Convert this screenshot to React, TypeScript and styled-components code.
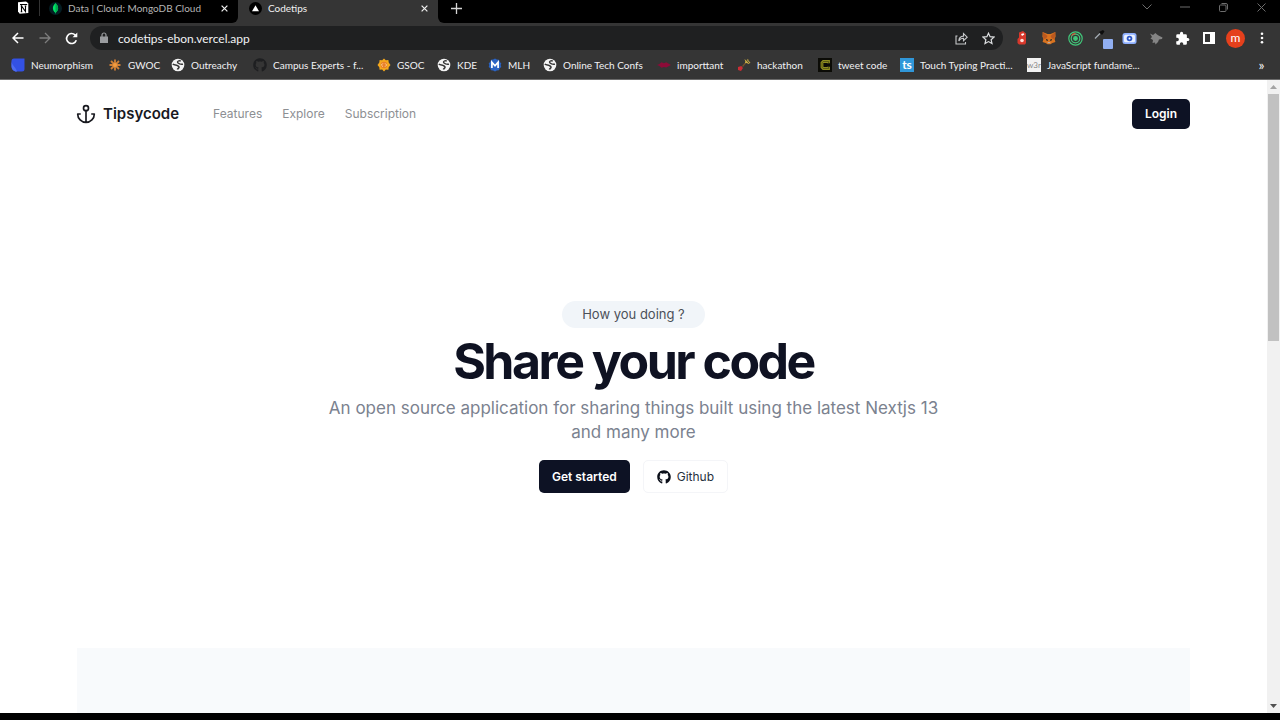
import React from "react";
import styled, { createGlobalStyle } from "styled-components";
import { FaGithub } from "react-icons/fa";

const chromeFont = `Lato, "Open Sans", sans-serif`;
const pageFont = `Inter, "Liberation Sans", sans-serif`;

const GlobalStyle = createGlobalStyle`
  *, *::before, *::after { box-sizing: border-box; }
  body { margin: 0; background: #000; }
  button, input { font: inherit; color: inherit; border: 0; background: none; padding: 0; margin: 0; }
  button { cursor: pointer; }
  a { color: inherit; text-decoration: none; }
  h1, p { margin: 0; }
  svg { display: block; flex: none; }
`;

const Window = styled.div`
  display: flex;
  flex-direction: column;
  height: 100vh;
  padding-bottom: 7px;
  overflow: hidden;
  background: #000;
`;

const Chrome = styled.header`
  flex: none;
  font-family: ${chromeFont};
  font-size: 10px;
  color: #f1f2f4;
  background: #353535;
`;

const TabStrip = styled.div`
  display: flex;
  height: 23px;
  background: #353535;
`;

const StripEnd = styled.div<{ $side: "left" | "right" }>`
  display: flex;
  flex: ${(p) => (p.$side === "right" ? "1" : "none")};
  background: #000;
  border-radius: ${(p) => (p.$side === "left" ? "0 0 6px 0" : "0 0 0 6px")};
`;

const PinnedTab = styled.button`
  display: flex;
  width: 40px;
  height: 16px;
  padding: 1px 0 0 17px;
  border-right: 1px solid #333;
`;

const Tab = styled.div<{ $active?: boolean }>`
  display: flex;
  align-items: center;
  gap: 6px;
  width: ${(p) => (p.$active ? 200 : 198)}px;
  height: 16px;
  padding-left: ${(p) => (p.$active ? 11 : 9)}px;
  padding-right: 10px;
  color: ${(p) => (p.$active ? "#f1f1f1" : "#b4b4b4")};
`;

const TabTitle = styled.button`
  flex: 1;
  text-align: left;
  line-height: 16px;
  white-space: nowrap;
`;

const IconButton = styled.button<{ $width?: number }>`
  display: flex;
  flex: none;
  align-items: center;
  justify-content: center;
  width: ${(p) => p.$width ?? 27}px;
  height: 22px;
`;

const NewTab = styled(IconButton)`
  height: 16px;
  margin-left: 5px;
`;

const WindowControls = styled.div`
  display: flex;
  margin-left: auto;
  height: 14px;
  color: #6d6d6d;
`;

const WindowButton = styled(IconButton)`
  width: 38px;
  height: 14px;
`;

const Toolbar = styled.div`
  display: flex;
  align-items: center;
  height: 30px;
  padding: 0 5px 0 4px;
`;

const Omnibox = styled.label`
  display: flex;
  flex: 1;
  align-items: center;
  height: 24px;
  margin: 0 6px 0 5px;
  padding: 0 1px 0 9px;
  border-radius: 12px;
  background: #1f2021;
`;

const Address = styled.input`
  flex: 1;
  min-width: 0;
  margin-left: 9px;
  font-size: 12px;
  outline: none;
`;

const Avatar = styled.span`
  display: grid;
  place-items: center;
  width: 19px;
  height: 19px;
  border-radius: 50%;
  background: #e5401c;
  color: #fff;
  font-size: 12px;
  line-height: 18px;
`;

const Bookmarks = styled.nav`
  display: flex;
  align-items: center;
  height: 26px;
  padding: 0 5px 3px 11px;
`;

const Bookmark = styled.a<{ $width: number }>`
  display: flex;
  align-items: center;
  gap: 6px;
  width: ${(p) => p.$width}px;
  line-height: 16px;
  white-space: nowrap;
`;

const Overflow = styled.button`
  margin-left: auto;
  width: 27px;
  font-size: 14px;
  line-height: 16px;
`;

const Viewport = styled.div`
  display: flex;
  flex: 1;
  min-height: 0;
  border-top: 1px solid #6b6b6b;
  background: #fff;
`;

const Page = styled.div`
  flex: 1;
  min-width: 0;
  overflow: hidden;
  padding: 0 77px;
  font-family: ${pageFont};
  color: #0f172a;
`;

const SiteHeader = styled.header`
  display: flex;
  align-items: center;
  height: 67px;
`;

const Brand = styled.a`
  display: flex;
  align-items: center;
  gap: 7px;
  font-size: 15px;
  font-weight: 600;
  color: #18191f;

  svg { margin-left: -1px; }
`;

const SiteNav = styled.nav`
  display: flex;
  flex: 1;
  gap: 20px;
  margin-left: 34px;
  font-size: 12px;
  color: #8d8f93;
`;

const Button = styled.button<{ $outline?: boolean; $small?: boolean }>`
  display: flex;
  align-items: center;
  gap: 6px;
  height: ${(p) => (p.$small ? 30 : 33)}px;
  padding: 0 13px;
  border-radius: 5px;
  border: ${(p) => (p.$outline ? "1px solid #f4f5f8" : "0")};
  background: ${(p) => (p.$outline ? "#fff" : "#0d1224")};
  color: ${(p) => (p.$outline ? "#27303d" : "#fff")};
  font-size: 12px;
  font-weight: ${(p) => (p.$outline ? 400 : 600)};
`;

const Hero = styled.section`
  display: flex;
  flex-direction: column;
  align-items: center;
  padding: 154px 0 155px;
  text-align: center;
`;

const Pill = styled.a`
  padding: 0 20px;
  border-radius: 14px;
  background: #f1f5f9;
  color: #4b5058;
  font-size: 13px;
  line-height: 27px;
`;

const Title = styled.h1`
  margin: 8px 0 10px;
  font-size: 50px;
  line-height: 50px;
  font-weight: 700;
  letter-spacing: -0.05em;
  color: #0f1222;
`;

const Lead = styled.p`
  max-width: 620px;
  font-size: 17px;
  line-height: 24px;
  color: #7b828f;
`;

const Actions = styled.div`
  display: flex;
  gap: 13px;
  margin-top: 16px;
`;

const FeaturePanel = styled.section`
  height: 400px;
  background: #f8fafc;
`;

const Scrollbar = styled.div`
  display: flex;
  flex-direction: column;
  align-items: center;
  width: 13px;
  background: #f1f1f1;
`;

const ScrollArrow = styled.div<{ $down?: boolean }>`
  display: grid;
  place-items: center;
  width: 13px;
  height: 14px;
  margin-top: ${(p) => (p.$down ? "auto" : "0")};
  color: ${(p) => (p.$down ? "#505050" : "#a3a3a3")};
`;

const ScrollThumb = styled.div`
  width: 11px;
  height: 39%;
  background: #c1c1c1;
`;

const AnchorIcon = () => (
  <svg width="20" height="20" viewBox="0 0 24 24" fill="none" stroke="currentColor" strokeWidth="2" strokeLinecap="round" strokeLinejoin="round">
    <circle cx="12" cy="5" r="3" />
    <path d="M12 22V8M5 12H2a10 10 0 0 0 20 0h-3" />
  </svg>
);

const NotionIcon = () => (
  <svg width="12" height="13" viewBox="0 0 12 13">
    <path d="M1 1.2 9 .5l2.3 1.8V12l-8.6.7L1 10.5Z" fill="#fff" />
    <path d="M3 3.5h7.2M4.500 10.500V5l4 5.500V5M3.700 5h1.600M7.700 5h1.600M3.700 10.700h1.600" fill="none" stroke="#000" strokeWidth="1.100" />
  </svg>
);

const MongoIcon = () => (
  <svg width="13" height="13" viewBox="0 0 13 13">
    <circle cx="6.5" cy="6.5" r="6.5" fill="#041d23" />
    <path d="M6.5 1C8.6 3 9.1 4.7 9.1 6.3c0 2-1 3.2-2.2 4.2L6.5 12l-.4-1.500C4.900 9.500 3.900 8.300 3.900 6.300 3.900 4.700 4.500 3 6.500 1Z" fill="#00e266" />
    <path d="M6.500 1c2.100 2 2.600 3.700 2.600 5.300 0 2-1 3.200-2.600 4.500Z" fill="#00a84d" />
  </svg>
);

const VercelIcon = () => (
  <svg width="13" height="13" viewBox="0 0 13 13">
    <circle cx="6.500" cy="6.500" r="6.500" fill="#000" />
    <path d="m6.500 3.200 3.500 6H3Z" fill="#fff" />
  </svg>
);

const CloseIcon = () => (
  <svg width="7" height="7" viewBox="0 0 8 8" fill="none" stroke="#f1f1f1" strokeWidth="1.400">
    <path d="m.7.7 6.600 6.600M7.300.7.7 7.300" />
  </svg>
);

const GlobeIcon = () => (
  <svg width="14" height="14" viewBox="0 0 14 14">
    <circle cx="7" cy="7" r="6.300" fill="#f4f4f4" />
    <path d="M9.800 3.200C8.500 2.300 6.600 2.800 6.500 4c-.1 1.300 1.200 1.400 2.300 1.900 1.200.5 2.300.4 3.200.2" fill="none" stroke="#353535" strokeWidth="1.400" />
    <path d="M1.800 6c1.500 1.500 3 .7 4.200 1.400 1 .6 2.300.8 2 2-.2.900-1.200 1-1.600 2.100" fill="none" stroke="#353535" strokeWidth="1.600" />
  </svg>
);

const GwocIcon = () => (
  <svg width="14" height="14" viewBox="0 0 14 14" stroke="#d07f35" strokeWidth="1.800">
    <path d="M7 1.500v11M1.500 7h11M3 3l8 8M11 3l-8 8" />
    <circle cx="7" cy="7" r="2" fill="#f29b3f" stroke="none" />
  </svg>
);

const GsocIcon = () => (
  <svg width="14" height="14" viewBox="0 0 14 14">
    <path d="m7 .5 1.800 1.700 2.600-.3.300 2.600L13.500 7l-1.800 2.200-.3 2.500-2.600-.2L7 13.500l-1.800-2-2.600.2-.3-2.500L.5 7l1.800-2.500.3-2.600 2.600.3Z" fill="#f5a81c" />
    <circle cx="7" cy="7" r="3.300" fill="#e87f2a" />
    <path d="M6 5.300 4.300 7 6 8.700M8 5.300 9.700 7 8 8.700" fill="none" stroke="#ffd08a" strokeWidth="1" />
  </svg>
);

const MlhIcon = () => (
  <svg width="14" height="14" viewBox="0 0 14 14">
    <path d="m7 .5 1.800 1 2.200.2.700 2L13.300 5.500 12.700 7l.6 2-1.600 1.300-.7 2-2.200.1L7 13.500l-1.800-1.100-2.200-.1-.7-2L.7 9l.6-2-.6-1.500 1.600-1.800.7-2 2.200-.2Z" fill="#2a63c4" />
    <path d="M3.900 10V4.200L7 7.700l3.100-3.500V10" fill="none" stroke="#fff" strokeWidth="1.700" />
  </svg>
);

const NeumorphismIcon = () => (
  <svg width="14" height="14" viewBox="0 0 14 14">
    <path d="M3 .5h10.500V11a2.500 2.500 0 0 1-2.500 2.500H5.500C2.500 13.500.5 11 .5 8V3A2.500 2.500 0 0 1 3 .5Z" fill="#3351e4" />
    <path d="M.5 3C1 8 5 9 6 13.500h-.5C2.500 13.500.5 11 .5 8Z" fill="#4d6bf0" />
  </svg>
);

const ImportantIcon = () => (
  <svg width="14" height="14" viewBox="0 0 14 14">
    <path d="M0 7c2-.3 3-1.500 4.300-2.700L7 5.200l2.200-.9L14 7l-4.800 2.600L7 9 4.300 9.700C3 8.500 2 7.500 0 7Z" fill="#8c0b38" />
  </svg>
);

const HackathonIcon = () => (
  <svg width="14" height="14" viewBox="0 0 14 14">
    <path d="m1 9 3.300-1 1.700 2-2 3-3-1Z" fill="#c92d35" />
    <path d="m5.500 8.500 2.500-3" stroke="#75502e" strokeWidth="1.200" />
    <path d="m7.500 1 2 1.800L11 .7l.7 2.300 1.800 1.500-2 1.500-1.700-1-2 .5.500-2Z" fill="#c8aa45" />
    <path d="m9 1.500 3 3.500" stroke="#4c4932" />
  </svg>
);

const TweetIcon = () => (
  <svg width="14" height="14" viewBox="0 0 14 14">
    <path d="M0 0h14v14H0Z" fill="#0b0b06" />
    <path d="M10.500 5.200V3.500H5.300L4 4.800v4.400l1.300 1.300h5.200V8.800" fill="none" stroke="#8d8c20" strokeWidth="2.800" />
    <path d="M10.500 5.200V3.500H5.300L4 4.800v4.400l1.300 1.300h5.200V8.800" fill="none" stroke="#3a3b0c" strokeWidth=".6" />
  </svg>
);

const LetterIcon = styled.span<{ $bg: string; $color: string; $size: number }>`
  display: grid;
  place-items: center;
  flex: none;
  width: 14px;
  height: 14px;
  overflow: hidden;
  background: ${(p) => p.$bg};
  color: ${(p) => p.$color};
  font-size: ${(p) => p.$size}px;
  line-height: 12px;
  font-weight: ${(p) => (p.$size > 8 ? 700 : 400)};
`;

const bookmarks: { label: string; width: number; icon: React.ReactNode }[] = [
  { label: "Neumorphism", width: 97, icon: <NeumorphismIcon /> },
  { label: "GWOC", width: 63, icon: <GwocIcon /> },
  { label: "Outreachy", width: 82, icon: <GlobeIcon /> },
  { label: "Campus Experts - f...", width: 124, icon: <FaGithub size={14} color="#1e1f21" /> },
  { label: "GSOC", width: 60, icon: <GsocIcon /> },
  { label: "KDE", width: 51, icon: <GlobeIcon /> },
  { label: "MLH", width: 55, icon: <MlhIcon /> },
  { label: "Online Tech Confs", width: 114, icon: <GlobeIcon /> },
  { label: "importtant", width: 80, icon: <ImportantIcon /> },
  { label: "hackathon", width: 81, icon: <HackathonIcon /> },
  { label: "tweet code", width: 82, icon: <TweetIcon /> },
  { label: "Touch Typing Practi...", width: 127, icon: <LetterIcon $bg="#3097d9" $color="#fff" $size={12}>ts</LetterIcon> },
  { label: "JavaScript fundame...", width: 120, icon: <LetterIcon $bg="#f2f2f2" $color="#888" $size={8}>w3r</LetterIcon> },
];

const extensions: { name: string; width: number; icon: React.ReactNode }[] = [
  {
    name: "Red extension",
    width: 26,
    icon: (
      <svg width="14" height="16" viewBox="0 0 14 16">
        <path d="M4 2.500 8 1l3 2.500V13l-1 1.500H4L2.500 13V9L4 7.500Z" fill="#d8382c" />
        <path d="m6 4 2.500-.8.800 1.300L7 6Z" fill="#fff" />
        <circle cx="7" cy="10.500" r="1.800" fill="#ffe1db" />
      </svg>
    ),
  },
  {
    name: "Fox wallet",
    width: 27,
    icon: (
      <svg width="14" height="14" viewBox="0 0 14 14">
        <path d="m.7 1 4.800 2h3l4.800-2 .3 4.500-1 2.500.8 3-3 1-2 1.300H5.600L3.600 12l-3-1 .8-3-1-2.500Z" fill="#d9731f" />
        <path d="m.7 1 4.800 4-1.400 2.500-2.700.5ZM13.300 1 8.500 5l1.400 2.500 2.700.5Z" fill="#b95820" />
        <path d="m4 8 2 .8-.2 1.200L4 9.200ZM10 8l-2 .8.200 1.200L10 9.200Z" fill="#2c2a2a" />
        <path d="M5.800 11h2.400l.4 1.300H5.400Z" fill="#bda999" />
      </svg>
    ),
  },
  {
    name: "Target",
    width: 27,
    icon: (
      <svg width="15" height="15" viewBox="0 0 15 15" fill="none" stroke="#41c77a" strokeWidth="1.200">
        <circle cx="7.500" cy="7.500" r="6.700" />
        <circle cx="7.500" cy="7.500" r="4.300" />
        <circle cx="7.500" cy="7.500" r="1.800" fill="#41c77a" />
        <path d="M3.500 4.500a5 5 0 0 1 4-1.900" stroke="#d9573a" />
      </svg>
    ),
  },
  {
    name: "Colour picker",
    width: 27,
    icon: (
      <svg width="22" height="22" viewBox="0 0 22 22">
        <path d="m3 11.500 5-5" stroke="#a5adb5" strokeWidth="1.300" />
        <path d="m7 5 3 3 2.500-3.500L11 3Z" fill="#0d0d0d" />
        <rect x="11" y="12" width="10" height="10" rx="1" fill="#91aff1" />
      </svg>
    ),
  },
  {
    name: "Screenshot",
    width: 27,
    icon: (
      <svg width="15" height="13" viewBox="0 0 15 13">
        <rect x=".5" y="1" width="14" height="11" rx="2.500" fill="#8fb0ff" />
        <rect x="2" y="2.700" width="11" height="7.600" rx="1.500" fill="#e9f0ff" />
        <circle cx="7.500" cy="6.500" r="2.800" fill="#2c56c8" />
        <circle cx="7.500" cy="6.500" r="1" fill="#fff" />
      </svg>
    ),
  },
  {
    name: "Grey extension",
    width: 26,
    icon: (
      <svg width="14" height="14" viewBox="0 0 14 14">
        <path d="M1 2.500 4 4l2.500-2L8 3.500l1.500 1L13.500 6.500 13 8l-3 .5L9 11l-2.500 2.500-.5-2-2.500.5L4 9 1.500 7.500 3 6Z" fill="#858585" />
      </svg>
    ),
  },
  {
    name: "Extensions",
    width: 26,
    icon: (
      <svg width="15" height="15" viewBox="0 0 24 24" fill="#fff">
        <path d="M20.500 11H19V7a2 2 0 0 0-2-2h-4V3.500a2.500 2.500 0 0 0-5 0V5H4a2 2 0 0 0-2 2v3.800h1.500a2.700 2.700 0 0 1 0 5.400H2V20a2 2 0 0 0 2 2h3.800v-1.500a2.700 2.700 0 0 1 5.400 0V22H17a2 2 0 0 0 2-2v-4h1.500a2.500 2.500 0 0 0 0-5Z" />
      </svg>
    ),
  },
  {
    name: "Side panel",
    width: 27,
    icon: (
      <svg width="12" height="12" viewBox="0 0 12 12">
        <path d="M0 0h12v12H0ZM2 2v8h5V2Z" fill="#fff" fillRule="evenodd" />
      </svg>
    ),
  },
];

export default function App() {
  return (
    <Window>
      <GlobalStyle />
      <Chrome>
        <TabStrip>
          <StripEnd $side="left">
            <PinnedTab aria-label="Notion"><NotionIcon /></PinnedTab>
            <Tab>
              <MongoIcon />
              <TabTitle>Data | Cloud: MongoDB Cloud</TabTitle>
              <button aria-label="Close tab"><CloseIcon /></button>
            </Tab>
          </StripEnd>
          <Tab $active>
            <VercelIcon />
            <TabTitle>Codetips</TabTitle>
            <button aria-label="Close tab"><CloseIcon /></button>
          </Tab>
          <StripEnd $side="right">
            <NewTab aria-label="New tab">
              <svg width="11" height="11" viewBox="0 0 11 11" stroke="#d5d5d5" strokeWidth="1.300"><path d="M5.500 0v11M0 5.500h11" /></svg>
            </NewTab>
            <WindowControls>
              <WindowButton aria-label="Search tabs">
                <svg width="10" height="6" viewBox="0 0 10 6" fill="none" stroke="currentColor"><path d="m.5.5 4.500 4.500L9.500.5" /></svg>
              </WindowButton>
              <WindowButton aria-label="Minimize">
                <svg width="10" height="2" viewBox="0 0 10 2" stroke="currentColor"><path d="M0 1h10" /></svg>
              </WindowButton>
              <WindowButton aria-label="Restore">
                <svg width="9" height="9" viewBox="0 0 9 9" fill="none" stroke="currentColor"><rect x=".5" y="2" width="6.500" height="6.500" rx="1" /><path d="M2.500.5H7A1.500 1.500 0 0 1 8.500 2v4.500" /></svg>
              </WindowButton>
              <WindowButton aria-label="Close">
                <svg width="9" height="9" viewBox="0 0 9 9" stroke="currentColor"><path d="m.5.500 8 8M8.500.500l-8 8" /></svg>
              </WindowButton>
            </WindowControls>
          </StripEnd>
        </TabStrip>

        <Toolbar>
          <IconButton aria-label="Back">
            <svg width="12" height="12" viewBox="0 0 12 12" fill="none" stroke="#fff" strokeWidth="1.500"><path d="M11.500 6H1M6 1 1 6l5 5" /></svg>
          </IconButton>
          <IconButton aria-label="Forward">
            <svg width="12" height="12" viewBox="0 0 12 12" fill="none" stroke="#7d7d7d" strokeWidth="1.300"><path d="M.5 6H11M6 1l5 5-5 5" /></svg>
          </IconButton>
          <IconButton aria-label="Reload">
            <svg width="13" height="13" viewBox="0 0 13 13" fill="none" stroke="#fff" strokeWidth="1.600"><path d="M11.300 8.200A5 5 0 1 1 10 2.900L11.500 4.300" /><path d="M12.300.5v4.700H7.600Z" fill="#fff" stroke="none" /></svg>
          </IconButton>
          <Omnibox>
            <svg width="10" height="12" viewBox="0 0 10 12"><path d="M1 4.500h8V11H1Z" fill="#9a9c9f" /><path d="M3 5V3a2 2 0 0 1 4 0v2" fill="none" stroke="#9a9c9f" strokeWidth="1.200" /></svg>
            <Address aria-label="Address" defaultValue="codetips-ebon.vercel.app" />
            <IconButton aria-label="Share this page">
              <svg width="13" height="13" viewBox="0 0 13 13" fill="none" stroke="#c6c8ca" strokeWidth="1.100"><path d="M2.500 4H1v8h9.500v-2M3.800 9c.2-3.200 2-4.800 4.700-4.900V1.500L12.200 5.200 8.500 8.700V6.300C6.300 6.300 5 7 3.800 9Z" /></svg>
            </IconButton>
            <IconButton aria-label="Bookmark this tab">
              <svg width="13" height="13" viewBox="0 0 13 13" fill="none" stroke="#dcdee0" strokeWidth="1.200"><path d="m6.500 1.200 1.600 3.500 3.900.4-2.900 2.600.9 3.900-3.500-2-3.500 2 .9-3.900L1 5.100l3.900-.4Z" /></svg>
            </IconButton>
          </Omnibox>
          {extensions.map((e) => (
            <IconButton key={e.name} aria-label={e.name} $width={e.width}>{e.icon}</IconButton>
          ))}
          <IconButton aria-label="Profile"><Avatar>m</Avatar></IconButton>
          <IconButton aria-label="Menu" $width={26}>
            <svg width="4" height="12" viewBox="0 0 4 12" fill="#fff"><circle cx="2" cy="1.700" r="1.300" /><circle cx="2" cy="6" r="1.300" /><circle cx="2" cy="10.300" r="1.300" /></svg>
          </IconButton>
        </Toolbar>

        <Bookmarks aria-label="Bookmarks">
          {bookmarks.map((b) => (
            <Bookmark key={b.label} href="#" $width={b.width}>
              {b.icon}
              {b.label}
            </Bookmark>
          ))}
          <Overflow aria-label="More bookmarks">»</Overflow>
        </Bookmarks>
      </Chrome>

      <Viewport>
        <Page>
          <SiteHeader>
            <Brand href="#"><AnchorIcon />Tipsycode</Brand>
            <SiteNav>
              <a href="#features">Features</a>
              <a href="#explore">Explore</a>
              <a href="#subscription">Subscription</a>
            </SiteNav>
            <Button $small>Login</Button>
          </SiteHeader>
          <main>
            <Hero>
              <Pill href="#">How you doing ?</Pill>
              <Title>Share your code</Title>
              <Lead>An open source application for sharing things built using the latest Nextjs 13 and many more</Lead>
              <Actions>
                <Button>Get started</Button>
                <Button $outline><FaGithub size={14} color="#0b0f19" />Github</Button>
              </Actions>
            </Hero>
            <FeaturePanel id="features" />
          </main>
        </Page>
        <Scrollbar aria-hidden="true">
          <ScrollArrow>
            <svg width="7" height="4" viewBox="0 0 7 4" fill="currentColor"><path d="M3.500 0 7 4H0Z" /></svg>
          </ScrollArrow>
          <ScrollThumb />
          <ScrollArrow $down>
            <svg width="7" height="4" viewBox="0 0 7 4" fill="currentColor"><path d="M0 0h7L3.500 4Z" /></svg>
          </ScrollArrow>
        </Scrollbar>
      </Viewport>
    </Window>
  );
}
